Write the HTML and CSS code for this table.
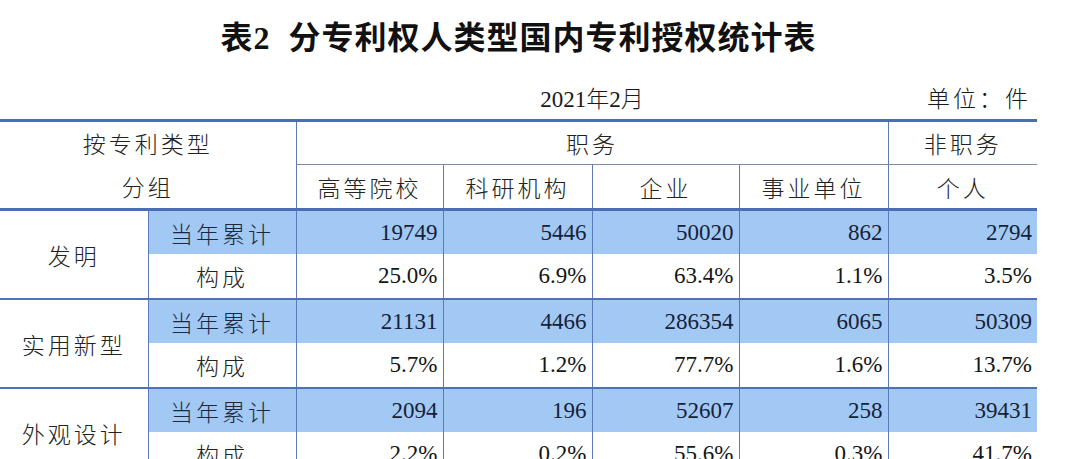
FILE: index.html
```html
<!DOCTYPE html>
<html lang="zh-CN">
<head>
<meta charset="utf-8">
<title>表2 分专利权人类型国内专利授权统计表</title>
<link rel="stylesheet" href="styles.css">
</head>
<body>
<div class="page">
  <h1 class="title">表2&nbsp;&nbsp;分专利权人类型国内专利授权统计表</h1>
  <div class="meta">
    <div class="meta-left"></div>
    <div class="meta-date">2021年2月</div>
    <div class="meta-unit">单位：件</div>
  </div>
  <table class="stats">
    <colgroup>
      <col class="c-group"><col class="c-sub">
      <col class="c-d1"><col class="c-d2"><col class="c-d3"><col class="c-d4"><col class="c-d5">
    </colgroup>
    <thead>
      <tr class="h1">
        <th colspan="2" class="h-left">按专利类型</th>
        <th colspan="4" class="h-mid v">职务</th>
        <th class="h-right v">非职务</th>
      </tr>
      <tr class="h2">
        <th colspan="2" class="h-left">分组</th>
        <th class="v">高等院校</th>
        <th class="v">科研机构</th>
        <th class="v">企业</th>
        <th class="v">事业单位</th>
        <th class="v">个人</th>
      </tr>
    </thead>
    <tbody class="grp">
      <tr class="acc">
        <td rowspan="2" class="g">发明</td>
        <td class="lbl">当年累计</td>
        <td>19749</td><td>5446</td><td>50020</td><td>862</td><td>2794</td>
      </tr>
      <tr class="pct">
        <td class="lbl">构成</td>
        <td>25.0%</td><td>6.9%</td><td>63.4%</td><td>1.1%</td><td>3.5%</td>
      </tr>
    </tbody>
    <tbody class="grp">
      <tr class="acc">
        <td rowspan="2" class="g">实用新型</td>
        <td class="lbl">当年累计</td>
        <td>21131</td><td>4466</td><td>286354</td><td>6065</td><td>50309</td>
      </tr>
      <tr class="pct">
        <td class="lbl">构成</td>
        <td>5.7%</td><td>1.2%</td><td>77.7%</td><td>1.6%</td><td>13.7%</td>
      </tr>
    </tbody>
    <tbody class="grp">
      <tr class="acc">
        <td rowspan="2" class="g">外观设计</td>
        <td class="lbl">当年累计</td>
        <td>2094</td><td>196</td><td>52607</td><td>258</td><td>39431</td>
      </tr>
      <tr class="pct">
        <td class="lbl">构成</td>
        <td>2.2%</td><td>0.2%</td><td>55.6%</td><td>0.3%</td><td>41.7%</td>
      </tr>
    </tbody>
  </table>
</div>
</body>
</html>
```

FILE: styles.css
```css
html, body {
  margin: 0;
  padding: 0;
  background: #ffffff;
}

body {
  font-family: "Liberation Serif", "Noto Sans CJK SC", serif;
  color: #1a1a1a;
  overflow: hidden;
}

.page {
  width: 1037px;
}

.title {
  margin: 0;
  padding-top: 4px;
  height: 68px;
  line-height: 68px;
  text-align: center;
  font-size: 32px;
  font-weight: 700;
  color: #111;
  letter-spacing: 1px;
}

.meta {
  display: grid;
  grid-template-columns: 296px 592px 149px;
  height: 47px;
  align-items: center;
  font-size: 23px;
  padding-top: 2px;
  box-sizing: border-box;
}

.meta-date {
  text-align: center;
  font-weight: 300;
}

.meta-unit {
  text-align: right;
  padding-right: 6px;
  font-weight: 300;
  letter-spacing: 3px;
}

.stats {
  border-collapse: collapse;
  table-layout: fixed;
  width: 1037px;
  font-size: 23px;
  border-top: 3px solid #4a6db3;
}

.c-group { width: 148px; }
.c-sub { width: 148px; }
.c-d1 { width: 147px; }
.c-d2 { width: 149px; }
.c-d3 { width: 147px; }
.c-d4 { width: 149px; }
.c-d5 { width: 149px; }

.stats th {
  font-weight: 300;
  text-align: center;
  padding: 0;
  letter-spacing: 3px;
  color: #222;
}

.stats th.v {
  border-left: 1px solid #5d7ab0;
}

.h1 th {
  height: 42px;
}

.h1 .h-mid,
.h1 .h-right {
  border-bottom: 1px solid #7d8ca3;
}

.h2 th {
  height: 43px;
  border-bottom: 3px solid #4a6db3;
}

.stats td {
  padding: 0 5px 0 0;
  text-align: right;
  border-left: 1px solid #5a7bb8;
  height: 43px;
  color: #151515;
}

.pct td {
  height: 44px;
}

.stats td.g {
  border-left: none;
  text-align: center;
  font-weight: 300;
  letter-spacing: 3px;
  padding: 0;
  background: #ffffff;
  color: #222;
}

.stats td.lbl {
  text-align: center;
  font-weight: 300;
  letter-spacing: 3px;
  padding: 0;
  color: #222;
}

.acc td {
  background: #a2c9f3;
  color: #16213a;
}

.acc td.lbl {
  color: #1d2840;
}

.grp + .grp {
  border-top: 2px solid #4f72b5;
}
```
